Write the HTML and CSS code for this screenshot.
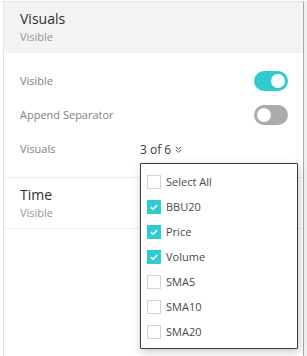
FILE: index.html
```html
<!DOCTYPE html>
<html>
<head>
<meta charset="utf-8">
<link rel="stylesheet" href="styles.css">
</head>
<body>
<div class="frame">
  <div class="panel">
    <div class="header">
      <div class="title">Visuals</div>
      <div class="sub">Visible</div>
    </div>
    <div class="section">
      <div class="row">
        <span class="label">Visible</span>
        <span class="toggle on"><span class="knob"></span></span>
      </div>
      <div class="row">
        <span class="label">Append Separator</span>
        <span class="toggle off"><span class="knob"></span></span>
      </div>
      <div class="row">
        <span class="label fixed">Visuals</span>
        <div class="value-wrap">
          <span class="value">3 of 6
            <svg class="chev" width="7" height="7" viewBox="0 0 7 7"><path d="M0.8 0.8 L3.5 3.2 L6.2 0.8 M0.8 3.8 L3.5 6.2 L6.2 3.8" fill="none" stroke="#555" stroke-width="1"/></svg>
          </span>
          <div class="dropdown">
            <div class="item"><span class="cb"></span><span>Select All</span></div>
            <div class="item"><span class="cb checked"><svg width="14" height="14" viewBox="0 0 14 14"><path d="M3.2 7.2 L5.8 9.6 L10.8 4.6" fill="none" stroke="#fff" stroke-width="1.8"/></svg></span><span>BBU20</span></div>
            <div class="item"><span class="cb checked"><svg width="14" height="14" viewBox="0 0 14 14"><path d="M3.2 7.2 L5.8 9.6 L10.8 4.6" fill="none" stroke="#fff" stroke-width="1.8"/></svg></span><span>Price</span></div>
            <div class="item"><span class="cb checked"><svg width="14" height="14" viewBox="0 0 14 14"><path d="M3.2 7.2 L5.8 9.6 L10.8 4.6" fill="none" stroke="#fff" stroke-width="1.8"/></svg></span><span>Volume</span></div>
            <div class="item"><span class="cb"></span><span>SMA5</span></div>
            <div class="item"><span class="cb"></span><span>SMA10</span></div>
            <div class="item"><span class="cb"></span><span>SMA20</span></div>
          </div>
        </div>
      </div>
    </div>
    <div class="section2">
      <div class="title">Time</div>
      <div class="sub">Visible</div>
    </div>
  </div>
  <div class="strip"></div>
</div>
</body>
</html>
```
FILE: styles.css
```css
* { box-sizing: border-box; }
html, body { margin: 0; padding: 0; background: #fff; }
body {
  font-family: "Open Sans", "Liberation Sans", sans-serif;
  width: 307px;
  height: 356px;
  overflow: hidden;
}
.frame {
  display: flex;
  height: 356px;
  padding-top: 1px;
}
.panel {
  margin-left: 3px;
  width: 301px;
  height: 355px;
  border-left: 1px solid #e3e3e3;
  border-top: 1px solid #e3e3e3;
  border-right: 1px solid #a8a8a8;
  background: #fff;
}
.strip {
  flex: 1;
  background: #f0f0f0;
}
.header {
  background: #f3f3f3;
  padding: 7px 16px 7px 16px;
  height: 51px;
}
.title {
  font-size: 14px;
  line-height: 20px;
  color: #2e2e2e;
}
.sub {
  font-size: 11px;
  line-height: 16px;
  color: #959595;
}
.section {
  padding: 18px 15px 18px 16px;
  display: flex;
  flex-direction: column;
  gap: 14px;
  border-bottom: 1px solid #ececec;
}
.row {
  display: flex;
  align-items: center;
  justify-content: space-between;
  height: 20px;
}
.label {
  font-size: 11px;
  line-height: 16px;
  color: #828282;
}
.label.fixed { width: 120px; flex: none; }
.value-wrap {
  position: relative;
  flex: 1;
  height: 20px;
}
.value {
  display: flex;
  align-items: center;
  gap: 4px;
  font-size: 12px;
  line-height: 16px;
  color: #3a3a3a;
  margin-top: 3px;
}
.chev { margin-top: -1px; }
.toggle {
  width: 34px;
  height: 20px;
  border-radius: 10px;
  display: flex;
  align-items: center;
  padding: 0 3px;
}
.toggle.on { background: #2ecbd0; justify-content: flex-end; }
.toggle.off { background: #ababab; justify-content: flex-start; }
.knob {
  width: 14px;
  height: 14px;
  border-radius: 50%;
  background: #fff;
}
.dropdown {
  position: absolute;
  left: 0;
  top: 24px;
  width: 158px;
  height: 186px;
  background: #fff;
  border: 1px solid #3c3c3c;
  border-radius: 1px;
  box-shadow: 1px 3px 8px rgba(0,0,0,0.22);
  padding: 5px 6px 4px 6px;
  z-index: 5;
}
.item {
  display: flex;
  align-items: center;
  gap: 5px;
  height: 25px;
  font-size: 11px;
  color: #4a4a4a;
}
.cb {
  width: 14px;
  height: 14px;
  border: 1px solid #d2d2d2;
  background: #fff;
  flex: none;
  display: flex;
  align-items: center;
  justify-content: center;
}
.cb.checked {
  background: #2ecbd0;
  border-color: #2ecbd0;
}
.section2 {
  padding: 7px 16px 7px 16px;
  border-bottom: 1px solid #ececec;
}
```
